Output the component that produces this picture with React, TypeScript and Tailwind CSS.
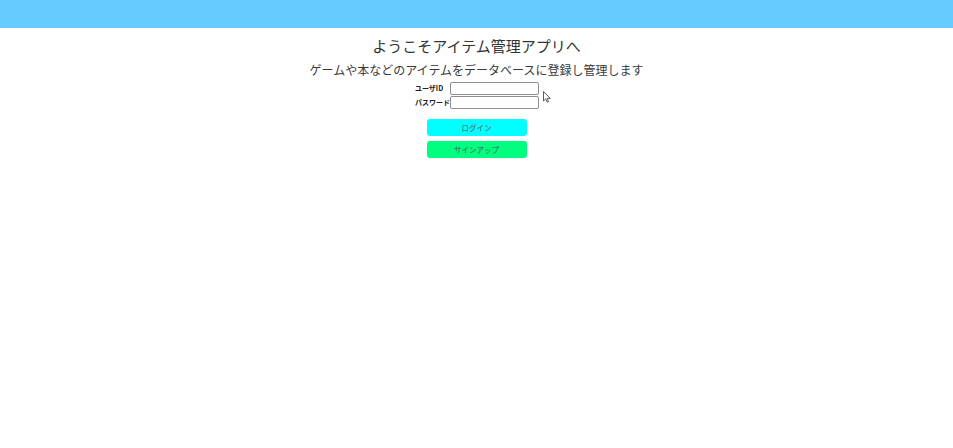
import React from "react";

export default function App() {
  return (
    <div
      className="w-[953px] h-[448px] bg-white relative overflow-hidden"
      style={{ fontFamily: '"Noto Sans CJK JP", "Noto Sans", sans-serif' }}
    >
      <div className="h-[28px] bg-[#66ccff]" />
      <div className="flex flex-col items-center">
        <h1 className="mt-[8px] text-[15px] leading-[20px] text-[#333] font-normal">
          ようこそアイテム管理アプリへ
        </h1>
        <p className="mt-[6px] text-[12px] leading-[16px] text-[#3a3a3a]">
          ゲームや本などのアイテムをデータベースに登録し管理します
        </p>
        <div className="mt-[4px] flex flex-col gap-[1px] pl-[1px]">
          <div className="flex items-center">
            <label className="w-[35px] text-[7px] leading-[13px] font-bold text-[#222]">ユーザID</label>
            <input className="w-[89px] h-[13px] border border-[#8f8f8f] rounded-[2px] bg-white" />
          </div>
          <div className="flex items-center">
            <label className="w-[35px] text-[7px] leading-[13px] font-bold text-[#222] whitespace-nowrap">パスワード</label>
            <input
              type="password"
              className="w-[89px] h-[13px] border border-[#8f8f8f] rounded-[2px] bg-white"
            />
          </div>
        </div>
        <button className="mt-[10px] w-[100px] h-[17px] rounded-[3px] bg-[#00ffff] text-[7.5px] leading-[17px] text-[#555]">
          ログイン
        </button>
        <button className="mt-[5px] w-[100px] h-[17px] rounded-[3px] bg-[#00ff80] text-[7.5px] leading-[17px] text-[#555]">
          サインアップ
        </button>
      </div>
      <svg
        className="absolute left-[543px] top-[91px]"
        width="8"
        height="12"
        viewBox="0 0 8 12"
      >
        <path
          d="M0.5 0.5 L0.5 10 L2.8 7.8 L4.3 11.3 L5.6 10.7 L4.2 7.4 L7.3 7.4 Z"
          fill="white"
          stroke="#333"
          strokeWidth="0.8"
          strokeLinejoin="round"
        />
      </svg>
    </div>
  );
}
